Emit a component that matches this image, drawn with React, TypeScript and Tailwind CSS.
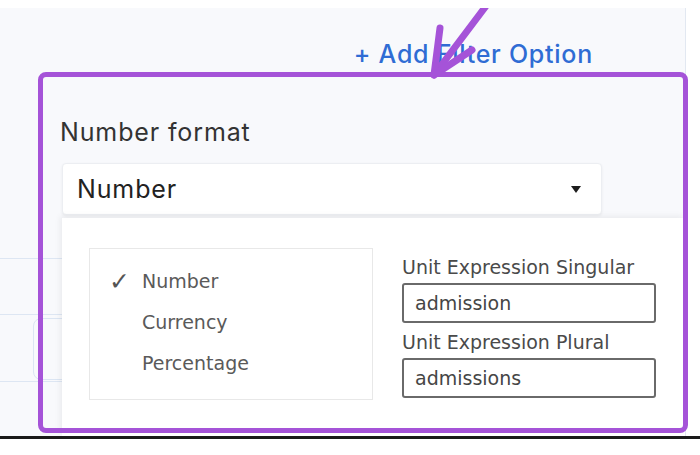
import React from "react";

const sans = { fontFamily: "Inter, 'Liberation Sans', Arial, sans-serif" };
const verd = { fontFamily: "'DejaVu Sans', Verdana, sans-serif" };

const formats = ["Number", "Currency", "Percentage"];

function UnitField({ label, value }: { label: string; value: string }) {
  return (
    <div className="flex flex-col">
      <label className="h-[24px] text-[19px] leading-[24px] text-[#4a4a4a] whitespace-nowrap">
        {label}
      </label>
      <input
        readOnly
        value={value}
        className="mt-[4px] h-[40px] w-[254px] rounded-[3px] border-2 border-[#6a6a6a] bg-white pl-[11px] text-[19px] text-[#454545] outline-none"
        style={verd}
      />
    </div>
  );
}

export default function App() {
  const selected = "Number";

  return (
    <div className="relative flex h-[455px] w-[700px] flex-col overflow-hidden bg-white">
      {/* top strip */}
      <div className="h-[8px] shrink-0 bg-white" />

      <div className="flex h-[428px] shrink-0">
        {/* page area */}
        <div className="relative h-full w-[686px] overflow-hidden border-r border-[#e2e8f1] bg-[#f8f9fc]">
          <div className="flex justify-end pr-[92px] pt-[32px]">
            <button
              className="text-[25px] font-medium leading-[28px] tracking-[0.03em] text-[#2f6cd4]"
              style={sans}
            >
              + Add Filter Option
            </button>
          </div>

          {/* form */}
          <div className="pl-[60px] pt-[50px]">
            <div
              className="text-[25px] leading-[28px] tracking-[0.035em] text-[#333]"
              style={sans}
            >
              Number format
            </div>
            <div className="ml-[2px] mt-[17px] flex h-[52px] w-[540px] items-center justify-between rounded-[4px] border border-[#eceef2] bg-white pl-[14px] pr-[20px] shadow-[0_1px_3px_rgba(0,0,0,0.06)]">
              <span
                className="text-[25px] leading-[28px] tracking-[0.035em] text-[#222]"
                style={sans}
              >
                Number
              </span>
              <svg width="10" height="7" viewBox="0 0 10 7">
                <path d="M0 0 H10 L5 7 Z" fill="#1d1d1d" />
              </svg>
            </div>
          </div>

          {/* table behind the popover */}
          <div className="mt-[43px] border-t border-[#dde6f3]">
            <div className="h-[55px]" />
            <div className="h-[68px] border-y border-[#dde6f3] pl-[33px] pt-[3px]">
              <div className="h-[62px] w-[80px] rounded-[8px] border border-[#dbe5f3]" />
            </div>
          </div>

          {/* dropdown popover */}
          <div
            className="absolute bottom-0 left-[62px] right-0 top-[210px] flex bg-white pl-[27px] pt-[30px] shadow-[-2px_-2px_6px_rgba(0,0,0,0.06)]"
            style={verd}
          >
            <ul className="h-[152px] w-[284px] border border-[#e8e8e8] pt-[12px]">
              {formats.map((f) => (
                <li
                  key={f}
                  className="flex h-[41px] items-center pl-[19px] text-[19px] text-[#5a5a5a]"
                >
                  <span className="w-[33px] text-[25px] leading-[25px] text-[#555]">
                    {f === selected ? "✓" : ""}
                  </span>
                  {f}
                </li>
              ))}
            </ul>
            <div className="ml-[29px] flex flex-col gap-[7px] pt-[7px]">
              <UnitField label="Unit Expression Singular" value="admission" />
              <UnitField label="Unit Expression Plural" value="admissions" />
            </div>
          </div>
        </div>
        <div className="flex-1 bg-white" />
      </div>

      <div className="h-[3px] shrink-0 bg-[#1a1a1a]" />
      <div className="flex-1 bg-white" />

      {/* annotation highlight */}
      <div className="pointer-events-none absolute left-[38px] top-[72px] h-[361px] w-[650px] rounded-[8px] border-[5px] border-[#a553d8]" />
      <svg
        className="pointer-events-none absolute left-0 top-0"
        width="700"
        height="455"
        viewBox="0 0 700 455"
      >
        <g stroke="#a553d8" strokeWidth="7" strokeLinecap="round" fill="none">
          <path d="M486 6 L434 75" />
          <path d="M440 28 L434 75 L472 50" strokeLinejoin="round" />
        </g>
        <rect x="0" y="0" width="700" height="8" fill="#fff" />
      </svg>
    </div>
  );
}
